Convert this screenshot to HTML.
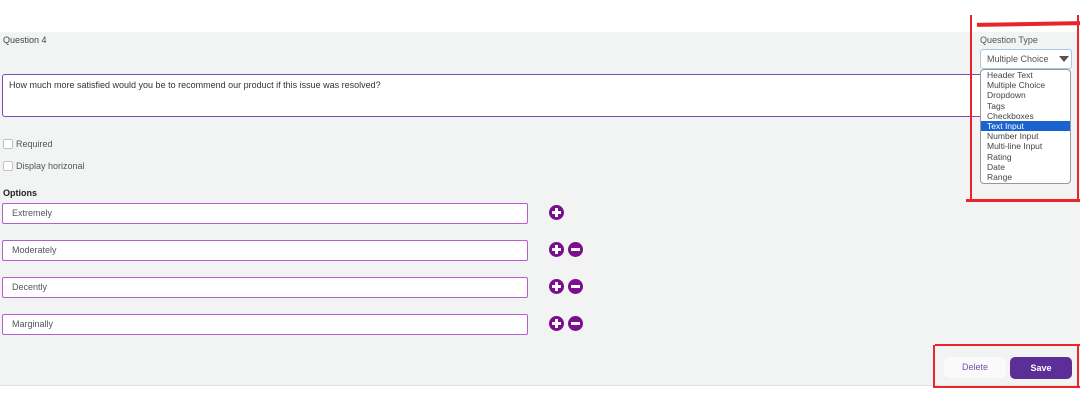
<!DOCTYPE html>
<html><head><style>
body{margin:0;width:1080px;height:402px;background:#fff;font-family:"Liberation Sans",sans-serif;position:relative;overflow:hidden}
.a{position:absolute}
.panel{left:0;top:32px;width:1080px;height:353px;background:#f2f3f3;border-bottom:1px solid #e3e3e3}
.t{font-size:9px;color:#333}
.inp{background:#fff;border:1px solid #b65fcc;border-radius:2px;font-size:9px;color:#555;box-sizing:border-box;padding-left:9px;line-height:19px;height:21px;width:526px;left:2px}
.cb{width:8px;height:8px;border:1px solid #c4c4c4;border-radius:2px;background:#fff}
.ic{width:15px;height:15px;border-radius:50%;background:#7a0e8f}
.ic:before{content:"";position:absolute;left:3px;top:6px;width:9px;height:3px;background:#fff}
.p:after{content:"";position:absolute;left:6px;top:3px;width:3px;height:9px;background:#fff}
.red{background:#e8262a}
.opt{font-size:8.5px;color:#444;height:10.2px;line-height:10.2px;padding-left:6px}
</style></head><body>
<div class="a panel"></div>
<div class="a t" style="left:3px;top:35px;color:#444">Question 4</div>
<div class="a" style="left:2px;top:74px;width:1000px;height:43px;background:#fff;border:1px solid #7d4bb7;border-radius:3px;box-sizing:border-box"></div>
<div class="a t" style="left:9px;top:80px">How much more satisfied would you be to recommend our product if this issue was resolved?</div>
<div class="a cb" style="left:3px;top:139px"></div><div class="a t" style="left:16px;top:139px;color:#555">Required</div>
<div class="a cb" style="left:3px;top:161px"></div><div class="a t" style="left:16px;top:161px;color:#555">Display horizonal</div>
<div class="a t" style="left:3px;top:188px;font-weight:bold;color:#222">Options</div>
<div class="a inp" style="top:203px">Extremely</div>
<div class="a inp" style="top:240px">Moderately</div>
<div class="a inp" style="top:277px">Decently</div>
<div class="a inp" style="top:314px">Marginally</div>
<div class="a ic p" style="left:549px;top:205px"></div>
<div class="a ic p" style="left:549px;top:242px"></div><div class="a ic" style="left:568px;top:242px"></div>
<div class="a ic p" style="left:549px;top:279px"></div><div class="a ic" style="left:568px;top:279px"></div>
<div class="a ic p" style="left:549px;top:316px"></div><div class="a ic" style="left:568px;top:316px"></div>
<div class="a t" style="left:980px;top:35px;color:#555">Question Type</div>
<div class="a" style="left:980px;top:49px;width:92px;height:20px;background:#fff;border:1px solid #a9c7e8;border-radius:3px;box-sizing:border-box;font-size:9px;color:#555;line-height:18px;padding-left:6px">Multiple Choice</div>
<div class="a" style="left:1059px;top:56px;width:0;height:0;border-left:5px solid transparent;border-right:5px solid transparent;border-top:6px solid #555"></div>
<div class="a" style="left:980px;top:69px;width:91px;height:115px;background:#fff;border:1px solid #999;border-radius:4px;box-sizing:border-box;padding-top:0;overflow:hidden">
<div class="opt">Header Text</div><div class="opt">Multiple Choice</div><div class="opt">Dropdown</div><div class="opt">Tags</div><div class="opt">Checkboxes</div><div class="opt" style="background:#1a62d0;color:#fff">Text Input</div><div class="opt">Number Input</div><div class="opt">Multi-line Input</div><div class="opt">Rating</div><div class="opt">Date</div><div class="opt">Range</div></div>
<div class="a" style="left:944px;top:357px;width:62px;height:21px;background:#fafafc;border-radius:5px;font-size:9px;color:#7a4fb0;text-align:center;line-height:21px">Delete</div>
<div class="a" style="left:1010px;top:357px;width:62px;height:22px;background:#5b2e98;border-radius:5px;font-size:9px;color:#fff;font-weight:bold;text-align:center;line-height:22px">Save</div>
<div class="a red" style="left:970px;top:15px;width:2px;height:185px"></div>
<div class="a red" style="left:977px;top:22px;width:103px;height:4px;transform:rotate(-1deg)"></div>
<div class="a red" style="left:966px;top:199px;width:114px;height:3px"></div>
<div class="a red" style="left:1077px;top:15px;width:2px;height:187px"></div>
<div class="a red" style="left:933px;top:345px;width:2px;height:43px"></div>
<div class="a red" style="left:935px;top:344px;width:145px;height:2px"></div>
<div class="a red" style="left:933px;top:386px;width:147px;height:2px"></div>
<div class="a red" style="left:1077px;top:345px;width:2px;height:43px"></div>
</body></html>
